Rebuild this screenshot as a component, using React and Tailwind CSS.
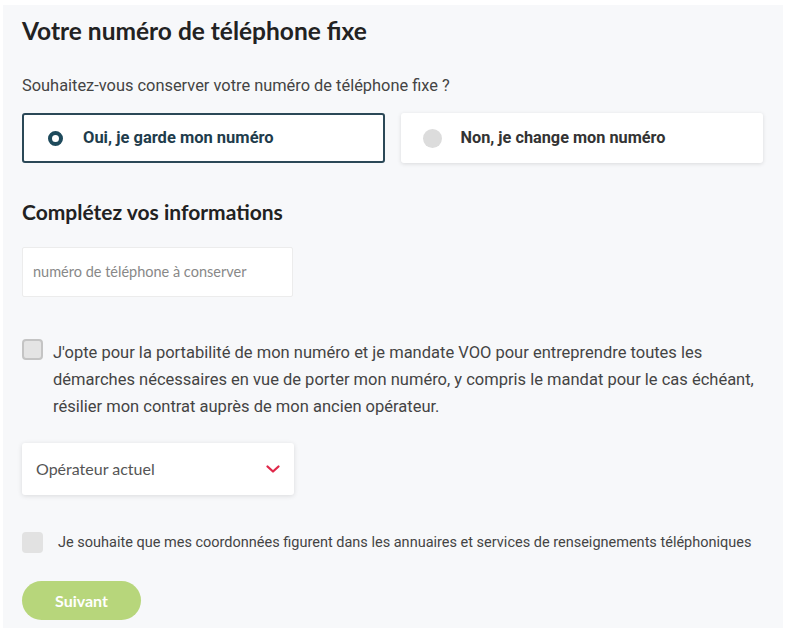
export default function App() {
  return (
    <div className="w-[800px] h-[631px] bg-white pt-[5px] pl-[3px]">
      <div className="w-[780px] h-[623px] bg-[#f7f8fa] pl-[19px] pr-[20px] pt-[10px] font-['Roboto',sans-serif]">
        <h1 className="font-['Lato',sans-serif] font-bold text-[24.5px] leading-[32px] text-[#222]">
          Votre numéro de téléphone fixe
        </h1>

        <p className="mt-[29px] text-[16.4px] leading-[20px] text-[#444]">
          Souhaitez-vous conserver votre numéro de téléphone fixe ?
        </p>

        <div className="mt-[17px] flex gap-[16px]">
          <label className="w-[363px] h-[50px] flex items-center border-2 border-[#2b4857] rounded-[3px] bg-white pl-[24px]">
            <span className="w-[15px] h-[15px] rounded-full border-[4px] border-[#1e4a5c] bg-white"></span>
            <span className="ml-[20px] text-[16.5px] font-bold text-[#1e3c4c]">Oui, je garde mon numéro</span>
          </label>
          <label className="w-[363px] h-[50px] flex items-center rounded-[3px] bg-white shadow-[0_1px_4px_rgba(0,0,0,0.12)] pl-[22px]">
            <span className="w-[19px] h-[19px] rounded-full bg-[#dcdcdc]"></span>
            <span className="ml-[19px] text-[16.3px] font-bold text-[#333]">Non, je change mon numéro</span>
          </label>
        </div>

        <h2 className="mt-[35px] font-['Lato',sans-serif] font-bold text-[21px] leading-[28px] text-[#222]">
          Complétez vos informations
        </h2>

        <div className="mt-[21px] w-[271px] h-[50px] bg-white border border-[#ececec] rounded-[2px] flex items-center pl-[10px]">
          <span className="font-['Lato',sans-serif] text-[14.5px] text-[#888]">numéro de téléphone à conserver</span>
        </div>

        <div className="mt-[42px] flex items-start">
          <span className="shrink-0 w-[21px] h-[21px] rounded-[4px] bg-[#e4e4e4] border-2 border-[#c4c4c4]"></span>
          <p className="ml-[10px] w-[706px] text-[16.5px] leading-[27px] text-[#444]">
            J'opte pour la portabilité de mon numéro et je mandate VOO pour entreprendre toutes les démarches nécessaires en vue de porter mon numéro, y compris le mandat pour le cas échéant, résilier mon contrat auprès de mon ancien opérateur.
          </p>
        </div>

        <div className="mt-[23px] w-[272px] h-[52px] bg-white rounded-[3px] shadow-[0_1px_5px_rgba(0,0,0,0.12)] flex items-center justify-between pl-[14px] pr-[13px]">
          <span className="font-['Lato',sans-serif] text-[16px] text-[#555]">Opérateur actuel</span>
          <svg width="16" height="10" viewBox="0 0 16 10" fill="none">
            <path d="M2.5 2.5l5.5 5 5.5-5" stroke="#e0284a" strokeWidth="2.3" strokeLinecap="round" strokeLinejoin="round" />
          </svg>
        </div>

        <div className="mt-[37px] flex items-center">
          <span className="shrink-0 w-[21px] h-[21px] rounded-[4px] bg-[#e2e2e2]"></span>
          <p className="ml-[15px] text-[14.5px] leading-[20px] text-[#444]">
            Je souhaite que mes coordonnées figurent dans les annuaires et services de renseignements téléphoniques
          </p>
        </div>

        <button className="mt-[28px] w-[119px] h-[39px] rounded-full bg-[#b7d67b] text-white font-['Lato',sans-serif] font-bold text-[16px]">
          Suivant
        </button>
      </div>
    </div>
  );
}
